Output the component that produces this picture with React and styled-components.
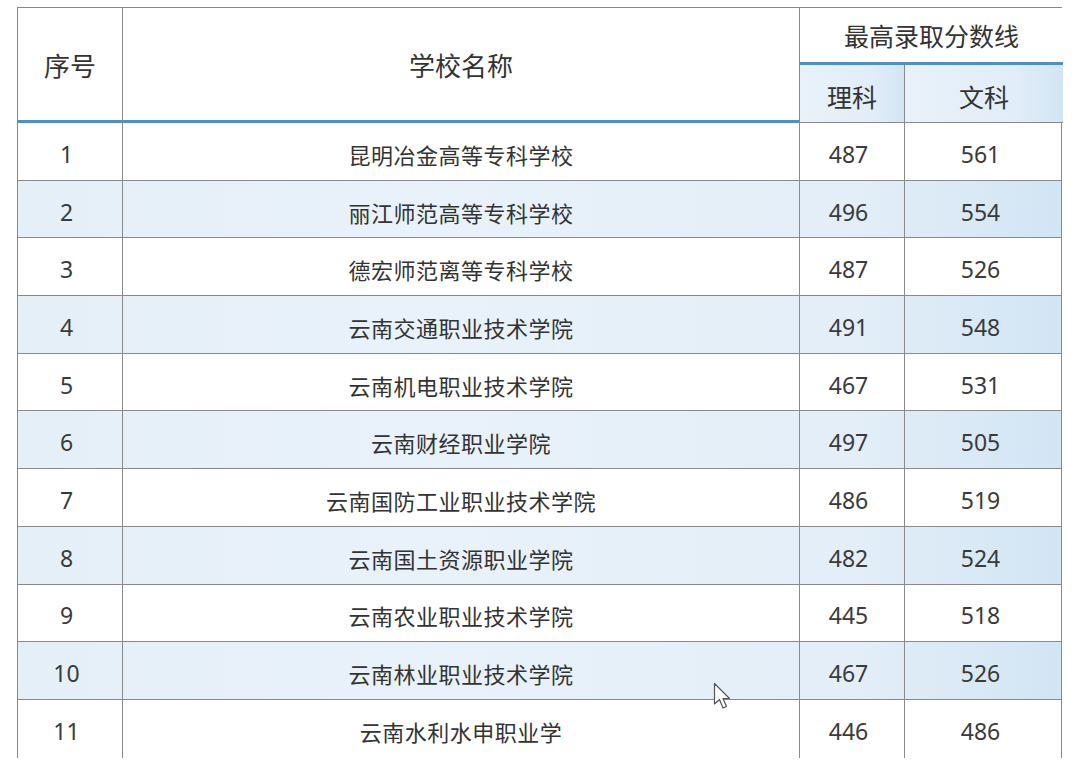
import styled, { createGlobalStyle } from "styled-components";

const GlobalStyle = createGlobalStyle`
  html, body {
    margin: 0;
    padding: 0;
    background: #ffffff;
  }
  body {
    font-family: "Noto Sans", "Noto Sans CJK SC", sans-serif;
    color: #363636;
  }
`;

const COLS = "104px 677px 105px 159px";
const LINE = "#8a8a8a";
const BLUE = "#4f8fc6";

const Page = styled.div`
  position: relative;
  width: 1080px;
  height: 762px;
  overflow: hidden;
  padding: 7px 0 0 17px;
  box-sizing: border-box;
`;

const Table = styled.div`
  width: 1045px;
  border-top: 1px solid ${LINE};
  border-left: 1px solid ${LINE};
  border-right: 1.5px solid ${LINE};
  box-sizing: border-box;
`;

const Head = styled.div`
  display: grid;
  grid-template-columns: ${COLS};
  grid-template-rows: 57px 58px;
`;

const HeadCell = styled.div`
  display: flex;
  align-items: center;
  justify-content: center;
  font-family: "Noto Sans CJK SC", sans-serif;
  font-size: ${(p) => p.$size || 25}px;
  color: #333;
  padding-top: ${(p) => p.$drop || 0}px;
  grid-row: ${(p) => p.$row || "auto"};
  grid-column: ${(p) => p.$col || "auto"};
  border-left: ${(p) => (p.$first ? "none" : `1px solid ${LINE}`)};
  border-bottom: ${(p) => (p.$blue ? `3px solid ${BLUE}` : `1px solid ${LINE}`)};
  background: ${(p) =>
    p.$tint
      ? "linear-gradient(90deg, #e9f2fa 0%, #e1edf8 70%, #d2e5f4 100%)"
      : "#ffffff"};
  box-sizing: border-box;
`;

const Row = styled.div`
  display: grid;
  grid-template-columns: ${COLS};
  height: 57.7px;
  border-bottom: ${(p) => (p.$last ? "none" : `1.5px solid ${LINE}`)};
  box-sizing: border-box;
  background: ${(p) =>
    p.$tint
      ? "linear-gradient(90deg, #e5eff8 0%, #e9f2fa 40%, #e3eef8 80%, #d2e5f4 100%)"
      : "#ffffff"};
`;

const Cell = styled.div`
  display: flex;
  align-items: center;
  justify-content: center;
  font-size: ${(p) => (p.$cjk ? 22 : 23)}px;
  letter-spacing: ${(p) => (p.$cjk ? "0.5px" : "0")};
  font-family: ${(p) =>
    p.$cjk ? '"Noto Sans CJK SC", sans-serif' : '"Noto Sans", "Noto Sans CJK SC", sans-serif'};
  color: ${(p) => (p.$cjk ? "#333" : "#3a3a3a")};
  border-left: ${(p) => (p.$first ? "none" : `1px solid ${LINE}`)};
  padding-top: 5px;
  padding-right: ${(p) => (p.$cjk ? 0 : 7)}px;
  box-sizing: border-box;
`;

const Cursor = styled.svg`
  position: absolute;
  left: 713px;
  top: 682px;
`;

const rows = [
  ["1", "昆明冶金高等专科学校", "487", "561"],
  ["2", "丽江师范高等专科学校", "496", "554"],
  ["3", "德宏师范离等专科学校", "487", "526"],
  ["4", "云南交通职业技术学院", "491", "548"],
  ["5", "云南机电职业技术学院", "467", "531"],
  ["6", "云南财经职业学院", "497", "505"],
  ["7", "云南国防工业职业技术学院", "486", "519"],
  ["8", "云南国土资源职业学院", "482", "524"],
  ["9", "云南农业职业技术学院", "445", "518"],
  ["10", "云南林业职业技术学院", "467", "526"],
  ["11", "云南水利水申职业学", "446", "486"],
];

export default function App() {
  return (
    <>
      <GlobalStyle />
      <Page>
        <Table>
          <Head>
            <HeadCell $first $row="1 / 3" $col="1" $blue $size={26}>
              序号
            </HeadCell>
            <HeadCell $row="1 / 3" $col="2" $blue $size={26}>
              学校名称
            </HeadCell>
            <HeadCell $row="1" $col="3 / 5" $blue>
              最高录取分数线
            </HeadCell>
            <HeadCell $row="2" $col="3" $tint $drop={4}>
              理科
            </HeadCell>
            <HeadCell $row="2" $col="4" $tint $drop={4}>
              文科
            </HeadCell>
          </Head>
          {rows.map((r, i) => (
            <Row key={r[0]} $tint={i % 2 === 1} $last={i === rows.length - 1}>
              <Cell $first>{r[0]}</Cell>
              <Cell $cjk>{r[1]}</Cell>
              <Cell>{r[2]}</Cell>
              <Cell>{r[3]}</Cell>
            </Row>
          ))}
        </Table>
        <Cursor width="22" height="30" viewBox="0 0 22 30">
          <path
            d="M1.5 1.5 L1.5 22 L6.5 17.5 L10 26 L13.5 24.5 L10 16.5 L16.5 16.5 Z"
            fill="#ffffff"
            stroke="#555"
            strokeWidth="1.2"
            strokeLinejoin="round"
          />
        </Cursor>
      </Page>
    </>
  );
}
